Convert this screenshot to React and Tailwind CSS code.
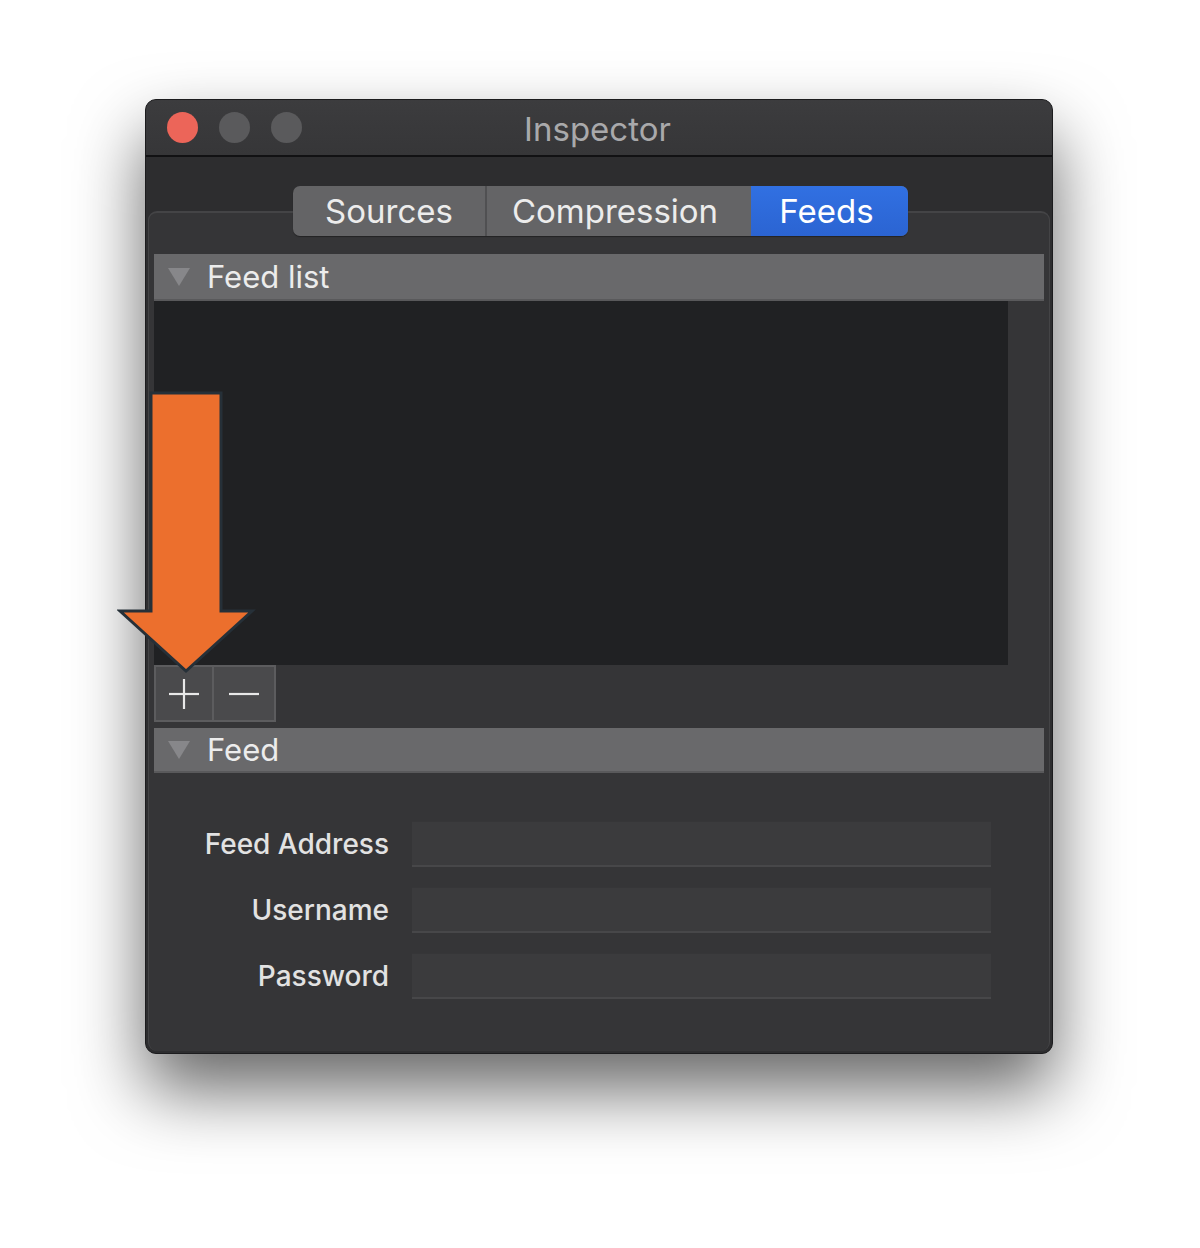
import React from "react";

const FONT = { fontFamily: "Inter, 'Noto Sans', sans-serif" };

function Triangle() {
  return (
    <svg width="24" height="22" viewBox="0 0 24 22" className="shrink-0">
      <polygon points="1,2 23,2 12,20" fill="#87878a" />
    </svg>
  );
}

function SectionHeader({ title, tall }) {
  return (
    <div
      className={`flex items-center border-b-2 border-[#59595b] bg-[#69696b] pl-[13px] ${
        tall ? "h-[47px]" : "h-[45px]"
      }`}
    >
      <Triangle />
      <span className="ml-[16px] text-[31px] leading-none text-[#ececec]">{title}</span>
    </div>
  );
}

function Field({ label }) {
  return (
    <div className="flex items-center">
      <div className="w-[235px] text-right text-[28px] font-medium leading-none text-[#e2e2e2]">{label}</div>
      <div className="ml-[23px] h-[46px] w-[579px] border-t border-t-[#363638] border-b-2 border-b-[#474749] bg-[#3b3b3d]" />
    </div>
  );
}

export default function App() {
  return (
    <div className="min-h-[1248px] w-[1200px] bg-white pt-[99px]" style={FONT}>
      <div className="relative ml-[145px] flex h-[955px] w-[908px] flex-col overflow-visible rounded-[11px] border border-[#1c1c1e] bg-[#2d2d2f] shadow-[0_36px_70px_rgba(0,0,0,0.6)]">
        {/* title bar */}
        <div className="relative flex h-[57px] items-center rounded-t-[10px] border-b-2 border-[#111113] bg-gradient-to-b from-[#3c3c3e] to-[#363638] pl-[21px]">
          <div className="h-[31px] w-[31px] rounded-full bg-[#ec6559]" />
          <div className="ml-[21px] h-[31px] w-[31px] rounded-full bg-[#5a5a5c]" />
          <div className="ml-[21px] h-[31px] w-[31px] rounded-full bg-[#5a5a5c]" />
          <div className="absolute inset-x-0 top-0 flex h-full items-center justify-center pt-[3px]">
            <span className="ml-[-3px] text-[33px] leading-none text-[#a9a9ab]">Inspector</span>
          </div>
        </div>

        {/* body */}
        <div className="flex flex-1 flex-col px-[2px] pb-[2px]">
          {/* segmented control */}
          <div className="relative z-10 mt-[29px] ml-[145px] flex h-[50px] w-[615px] overflow-hidden rounded-[7px] bg-[#646466] text-[33px] leading-none text-[#ececec] shadow-[0_1px_1px_rgba(0,0,0,0.35)]">
            <div className="flex w-[192px] items-center justify-center">Sources</div>
            <div className="w-[2px] bg-[#505052]" />
            <div className="flex w-[264px] items-center justify-center pr-[8px]">Compression</div>
            <div className="flex w-[157px] items-center justify-center bg-gradient-to-b from-[#3170e2] to-[#2b64d2] pr-[6px] text-white">Feeds</div>
          </div>

          {/* tab box */}
          <div className="-mt-[25px] flex flex-1 flex-col rounded-t-[9px] rounded-b-[9px] border-t-2 border-x border-[#444446] bg-[#353537] px-[5px] pt-[41px]">
            <SectionHeader title="Feed list" tall />
            <div className="h-[364px] w-[854px] bg-[#202123]" />
            <div className="flex h-[57px]">
              <div className="flex w-[60px] items-center justify-center border-2 border-[#5c5c5e] bg-[#4a4a4c]">
                <svg width="32" height="32" viewBox="0 0 32 32">
                  <line x1="16" y1="1" x2="16" y2="31" stroke="#e8e8e8" strokeWidth="2.2" />
                  <line x1="1" y1="16" x2="31" y2="16" stroke="#e8e8e8" strokeWidth="2.2" />
                </svg>
              </div>
              <div className="flex w-[62px] items-center justify-center border-2 border-l-0 border-[#5c5c5e] bg-[#4a4a4c]">
                <svg width="32" height="32" viewBox="0 0 32 32">
                  <line x1="1" y1="16" x2="31" y2="16" stroke="#e8e8e8" strokeWidth="2.2" />
                </svg>
              </div>
            </div>
            <div className="mt-[6px]">
              <SectionHeader title="Feed" />
            </div>
            <div className="mt-[48px] flex flex-col gap-[20px]">
              <Field label="Feed Address" />
              <Field label="Username" />
              <Field label="Password" />
            </div>
          </div>
        </div>

        {/* orange arrow annotation */}
        <svg
          className="absolute left-[-29px] top-[291px] z-20"
          width="140"
          height="285"
          viewBox="0 0 140 285"
        >
          <polygon
            points="34,2 104,2 104,220 135,220 69,280 3,220 34,220"
            fill="#ec6f2d"
            stroke="#263038"
            strokeWidth="3"
            strokeLinejoin="miter"
          />
        </svg>
      </div>
    </div>
  );
}
